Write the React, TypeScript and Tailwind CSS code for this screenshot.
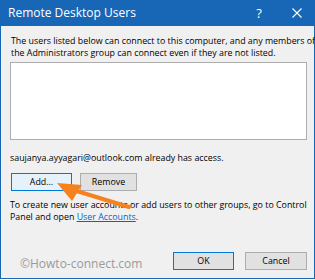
import React from "react";

const font = { fontFamily: '"Open Sans", "Noto Sans", sans-serif' };

function Arrow() {
  return (
    <svg
      className="pointer-events-none absolute left-0 top-0"
      width="315"
      height="280"
      viewBox="0 0 315 280"
    >
      <line x1="70" y1="189" x2="129" y2="207" stroke="#f5821f" strokeWidth="4" strokeLinecap="round" />
      <polygon points="57,183 82,185 72,201" fill="#f5821f" />
    </svg>
  );
}

export default function App() {
  return (
    <div className="relative h-[280px] w-[315px] overflow-hidden bg-white" style={font}>
      <div className="flex h-[279px] w-[315px] flex-col border-x border-b border-[#1866b6] bg-[#f0f0f0] text-[8.85px] leading-[12px] text-black">
        {/* title bar */}
        <div className="-mx-px flex h-[26px] items-center bg-[#1866b6] pl-[8px] text-white">
          <span className="flex-1 text-[12px] leading-[14px]">Remote Desktop Users</span>
          <span className="w-[14px] text-center text-[13px] leading-[14px]">?</span>
          <svg className="ml-[26px] mr-[13px]" width="10" height="10" viewBox="0 0 10 10">
            <path d="M0.5 0.5 L9.5 9.5 M9.5 0.5 L0.5 9.5" stroke="white" strokeWidth="1.1" />
          </svg>
        </div>

        <div className="flex flex-1 flex-col pl-[9px] pr-[7px]">
          <p className="mt-[9px] whitespace-nowrap pl-px">
            The users listed below can connect to this computer, and any members of
            <br />
            the Administrators group can connect even if they are not listed.
          </p>
          <div className="mt-[3px] h-[78px] border border-[#adadad] bg-white" />
          <p className="mt-[12px] whitespace-nowrap">saujanya.ayyagari@outlook.com already has access.</p>
          <div className="mt-[9px] flex gap-[8px] pl-px">
            <button className="flex h-[18px] w-[61px] items-center justify-center border border-[#0078d7] bg-[#e5f1fb]">
              Add...
            </button>
            <button className="flex h-[18px] w-[57px] items-center justify-center border border-[#adadad] bg-[#e1e1e1]">
              Remove
            </button>
          </div>
          <p className="mt-[8px] whitespace-nowrap">
            To create new user accounts or add users to other groups, go to Control
            <br />
            Panel and open <span className="text-[#0066cc] underline">User Accounts</span>.
          </p>
          <div className="mt-auto mb-[8px] flex items-end">
            <span className="ml-[10px] flex-1 text-[12px] leading-[13px] text-[#9a9a9a]">
              ©Howto-connect.com
            </span>
            <button className="flex h-[18px] w-[61px] items-center justify-center border border-[#0078d7] bg-[#e1e1e1]">
              OK
            </button>
            <button className="ml-[11px] flex h-[18px] w-[62px] items-center justify-center border border-[#adadad] bg-[#e1e1e1]">
              Cancel
            </button>
          </div>
        </div>
      </div>
      <Arrow />
    </div>
  );
}
